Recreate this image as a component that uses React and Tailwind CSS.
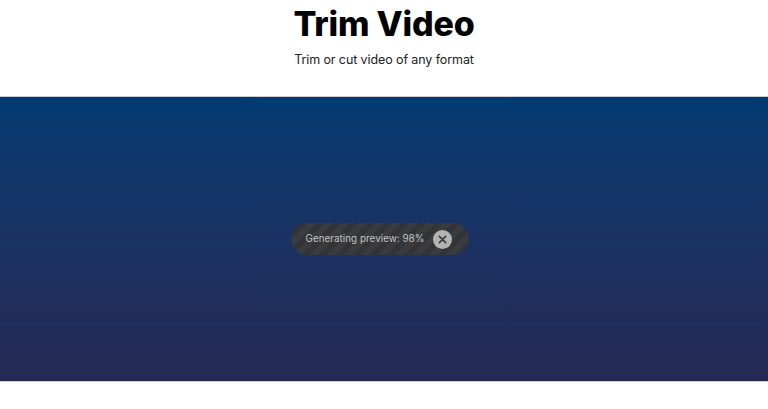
import React from 'react';

const App = () => {
  return (
    <div className="w-full min-h-[409px] bg-white font-['Inter',sans-serif]">
      {/* Header */}
      <header className="flex flex-col items-center pt-[4px] h-[96px]">
        <h1 className="text-[34px] leading-[40px] font-extrabold text-black tracking-[-0.2px]">Trim Video</h1>
        <p className="mt-[8px] text-[12.5px] leading-[16px] text-[#222] tracking-[-0.1px]">Trim or cut video of any format</p>
      </header>

      {/* Preview area */}
      <section className="h-[286px] border-y border-[#c9ccd3] bg-gradient-to-b from-[#013b72] to-[#242954] flex items-center justify-center">
        <div className="flex items-center gap-[9px] h-[32px] pl-[15px] pr-[17px] rounded-full bg-[repeating-linear-gradient(135deg,#3a3b3f_0px,#3a3b3f_6px,#333438_6px,#333438_12px)] translate-x-[-4px]">
          <span className="text-[9.8px] text-[#c4c4c4] tracking-[0.05px]">Generating preview: 98%</span>
          <button className="w-[19px] h-[19px] rounded-full bg-[#b3b3b3] flex items-center justify-center">
            <svg width="9" height="9" viewBox="0 0 10 10" fill="none" stroke="#3a3a3a" strokeWidth="1.8" strokeLinecap="round">
              <path d="M1.5 1.5 L8.5 8.5 M8.5 1.5 L1.5 8.5" />
            </svg>
          </button>
        </div>
      </section>
    </div>
  );
};

export default App;
